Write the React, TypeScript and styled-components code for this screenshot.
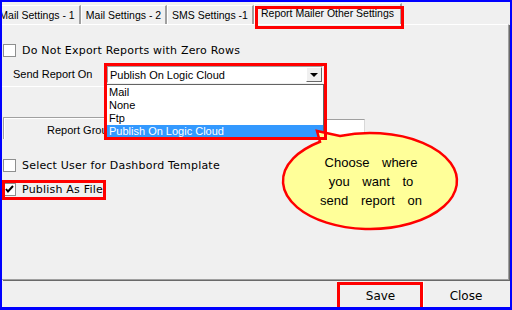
import styled, { createGlobalStyle } from "styled-components";

const GlobalStyle = createGlobalStyle`
    html, body {
        margin: 0;
        padding: 0;
        background: #ffffff;
    }
`;

const Window = styled.div`
    position: relative;
    width: 512px;
    height: 310px;
    box-sizing: border-box;
    border: 2px solid #0000ff;
    border-bottom-width: 3px;
    background: #f0f0f0;
    display: flex;
    flex-direction: column;
    overflow: hidden;
    font-family: "Liberation Sans", Arial, sans-serif;
    color: #000;
`;

const TabStrip = styled.div`
    display: flex;
    align-items: flex-end;
    height: 22px;
    flex-shrink: 0;
`;

const Tab = styled.div<{ $active?: boolean; $first?: boolean; $w: number }>`
    position: relative;
    box-sizing: border-box;
    width: ${(p) => p.$w}px;
    height: ${(p) => (p.$active ? "21px" : "19px")};
    margin-left: ${(p) => (p.$first ? "-8px" : "0")};
    display: flex;
    align-items: center;
    justify-content: center;
    font-size: 10.5px;
    white-space: nowrap;
    flex-shrink: 0;
    border-top: 1px solid #ffffff;
    border-left: 1px solid #ffffff;
    border-right: 2px solid #a0a0a0;
    padding-bottom: ${(p) => (p.$active ? "3px" : "0")};
`;

const Highlight = styled.div<{ $w: number; $h: number; $x: number; $y: number }>`
    position: absolute;
    left: ${(p) => p.$x}px;
    top: ${(p) => p.$y}px;
    width: ${(p) => p.$w}px;
    height: ${(p) => p.$h}px;
    box-sizing: border-box;
    border: 3px solid #ff0000;
    pointer-events: none;
    z-index: 5;
`;

const Panel = styled.div`
    position: relative;
    flex: 1;
    display: flex;
    flex-direction: column;
    border-top: 1px solid #ffffff;
    border-right: 1px solid #a0a0a0;
    border-bottom: 1px solid #a0a0a0;
    box-shadow: 1px 1px 0 #696969;
    margin-right: 1px;
    margin-bottom: 1px;
`;

const CheckRow = styled.label<{ $top: number }>`
    position: relative;
    display: flex;
    align-items: center;
    gap: 6px;
    margin-top: ${(p) => p.$top}px;
    margin-left: 1px;
    height: 13px;
    font-family: "DejaVu Sans", Verdana, sans-serif;
    font-size: 11px;
    letter-spacing: 0.2px;
    align-self: flex-start;
`;

const Box = styled.span`
    position: relative;
    width: 13px;
    height: 13px;
    box-sizing: border-box;
    background: #ffffff;
    border: 1px solid #8e8f8f;
    flex-shrink: 0;
`;

const SendRow = styled.div`
    display: flex;
    margin-top: 5px;
    height: 25px;
`;

const RowLabel = styled.div`
    width: 105px;
    box-sizing: border-box;
    padding-left: 11px;
    padding-top: 6px;
    font-size: 11px;
    border-bottom: 1px solid #ffffff;
`;

const ComboWrap = styled.div`
    position: relative;
    margin-top: 4px;
    width: 216px;
    height: 17px;
`;

const ComboField = styled.div`
    display: flex;
    align-items: center;
    justify-content: space-between;
    height: 17px;
    box-sizing: border-box;
    background: #ffffff;
    border: 1px solid;
    border-color: #a0a0a0 #ffffff #ffffff #a0a0a0;
    padding-left: 2px;
    font-size: 11px;
`;

const ComboButton = styled.div`
    width: 16px;
    height: 15px;
    box-sizing: border-box;
    display: flex;
    align-items: center;
    justify-content: center;
    background: #f0f0f0;
    border: 1px solid;
    border-color: #ffffff #696969 #696969 #ffffff;
`;

const Arrow = styled.span`
    width: 0;
    height: 0;
    border-left: 4px solid transparent;
    border-right: 4px solid transparent;
    border-top: 4px solid #000;
`;

const DropList = styled.div`
    position: absolute;
    left: -1px;
    top: 18px;
    width: 218px;
    box-sizing: border-box;
    padding-top: 1px;
    background: #ffffff;
    border: 1px solid #646464;
    z-index: 3;
`;

const DropItem = styled.div<{ $selected?: boolean }>`
    height: 13px;
    line-height: 13px;
    padding-left: 2px;
    font-size: 11px;
    background: ${(p) => (p.$selected ? "#3399ff" : "transparent")};
    color: ${(p) => (p.$selected ? "#ffffff" : "#000")};
`;

const GroupRow = styled.div`
    display: flex;
    margin-top: 30px;
    margin-left: 1px;
    height: 22px;
`;

const GroupHeader = styled.div`
    width: 318px;
    box-sizing: border-box;
    border-top: 1px solid #a0a0a0;
    border-left: 1px solid #a0a0a0;
    box-shadow: inset 1px 1px 0 #ffffff;
    padding-left: 43px;
    padding-top: 6px;
    font-size: 11px;
    white-space: nowrap;
    overflow: hidden;
`;

const GroupCell = styled.div`
    width: 44px;
    margin-top: 2px;
    box-sizing: border-box;
    background: #ffffff;
    border-top: 1px solid #a0a0a0;
    border-right: 1px solid #d8d8d8;
`;

const Bubble = styled.div`
    position: absolute;
    left: 278px;
    top: 103px;
    width: 182px;
    height: 104px;
    z-index: 4;
`;

const BubbleText = styled.div`
    position: absolute;
    left: 0;
    right: 0;
    top: 25px;
    text-align: center;
    font-size: 13px;
    line-height: 19px;
    word-spacing: 9px;
`;

const Footer = styled.div`
    display: flex;
    justify-content: flex-end;
    height: 26px;
    padding-right: 2px;
    flex-shrink: 0;
`;

const FooterButton = styled.div<{ $w: number }>`
    position: relative;
    width: ${(p) => p.$w}px;
    box-sizing: border-box;
    display: flex;
    align-items: center;
    justify-content: center;
    padding-top: 4px;
    font-family: "DejaVu Sans", Verdana, sans-serif;
    font-size: 12px;
    border-left: 1px solid #ffffff;
`;

function CheckMark() {
    return (
        <svg width="11" height="11" viewBox="0 0 11 11" style={{ position: "absolute", left: 0, top: 0 }}>
            <path d="M2 5 L4 7.5 L9 2" fill="none" stroke="#000" strokeWidth="2" />
        </svg>
    );
}

export default function App() {
    return (
        <>
            <GlobalStyle />
            <Window>
                <TabStrip>
                    <Tab $first $w={87}>Mail Settings - 1</Tab>
                    <Tab $w={86}>Mail Settings - 2</Tab>
                    <Tab $w={87}>SMS Settings -1</Tab>
                    <Tab $active $w={148}>Report Mailer Other Settings</Tab>
                </TabStrip>
                <Highlight $x={253} $y={4} $w={149} $h={23} />
                <Panel>
                    <CheckRow $top={19}>
                        <Box />
                        Do Not Export Reports with Zero Rows
                    </CheckRow>
                    <SendRow>
                        <RowLabel>Send Report On</RowLabel>
                        <ComboWrap>
                            <ComboField>
                                Publish On Logic Cloud
                                <ComboButton>
                                    <Arrow />
                                </ComboButton>
                            </ComboField>
                            <DropList>
                                <DropItem>Mail</DropItem>
                                <DropItem>None</DropItem>
                                <DropItem>Ftp</DropItem>
                                <DropItem $selected>Publish On Logic Cloud</DropItem>
                            </DropList>
                            <Highlight $x={-3} $y={-3} $w={223} $h={77} />
                        </ComboWrap>
                    </SendRow>
                    <GroupRow>
                        <GroupHeader>Report Group</GroupHeader>
                        <GroupCell />
                    </GroupRow>
                    <CheckRow $top={20}>
                        <Box />
                        Select User for Dashbord Template
                    </CheckRow>
                    <CheckRow $top={11}>
                        <Box>
                            <CheckMark />
                        </Box>
                        Publish As File
                        <Highlight $x={-1} $y={-3} $w={104} $h={20} />
                    </CheckRow>
                    <Bubble>
                        <svg width="182" height="104" viewBox="0 0 182 104">
                            <path
                                d="M 40 13.72 L 37 3 L 60 7.95 A 87 48 0 1 1 40 13.72 Z"
                                fill="#ffff99"
                                stroke="#ff0000"
                                strokeWidth="2.5"
                            />
                        </svg>
                        <BubbleText>
                            Choose where
                            <br />
                            you want to
                            <br />
                            send report on
                        </BubbleText>
                    </Bubble>
                </Panel>
                <Footer>
                    <FooterButton $w={86}>
                        Save
                        <Highlight $x={-1} $y={1} $w={86} $h={30} />
                    </FooterButton>
                    <FooterButton $w={85}>Close</FooterButton>
                </Footer>
            </Window>
        </>
    );
}
